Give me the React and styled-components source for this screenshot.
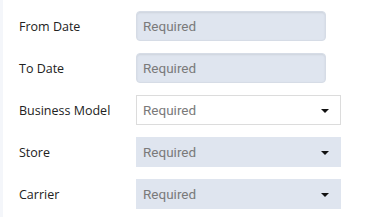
import React from 'react';
import styled, { createGlobalStyle } from 'styled-components';

const Global = createGlobalStyle`
    body {
        margin:0;
        background:#fff;
        font-family:"Open Sans", "Noto Sans", sans-serif;
    }
`;

const Page = styled.div`
    display:flex;
    min-height:217px;
`;

const Strip = styled.div`
    width:3px;
    background:#f4f6fa;
`;

const Form = styled.div`
    display:flex;
    flex-direction:column;
    gap:12px;
    padding:11px 0 0 16px;
`;

const Row = styled.div`
    display:flex;
    align-items:center;
    height:30px;
`;

const Label = styled.label`
    width:117px;
    font-size:12.5px;
    color:#222;
`;

const Field = styled.div`
    position:relative;
    box-sizing:border-box;
    width:${p => p.$select ? '205px' : '190px'};
    height:30px;
    display:flex;
    align-items:center;
    padding-left:6px;
    background:${p => p.$white ? '#fff' : '#dfe5ef'};
    border:${p => p.$white ? '1px solid #dcdcdc' : p.$select ? '1px solid #dfe5ef' : '1px solid #d6dce6'};
    border-radius:${p => p.$select ? '0' : '4px'};
    box-shadow:${p => p.$select ? 'none' : 'inset 0 1px 2px rgba(0,0,0,0.08)'};
    font-family:Roboto, Arial, sans-serif;
    font-size:13.5px;
    color:#7a7a7a;
`;

const Caret = styled.span`
    position:absolute;
    right:11px;
    top:13px;
    width:0;
    height:0;
    border-left:4px solid transparent;
    border-right:4px solid transparent;
    border-top:4px solid #111;
`;

const rows = [
    { label: 'From Date' },
    { label: 'To Date' },
    { label: 'Business Model', select: true, white: true },
    { label: 'Store', select: true },
    { label: 'Carrier', select: true },
];

const App = () => {
    return <Page>
        <Global />
        <Strip />
        <Form>
            {rows.map(r => <Row key={r.label}>
                <Label>{r.label}</Label>
                <Field $select={r.select} $white={r.white}>
                    Required
                    {r.select && <Caret />}
                </Field>
            </Row>)}
        </Form>
    </Page>
}

export default App;
